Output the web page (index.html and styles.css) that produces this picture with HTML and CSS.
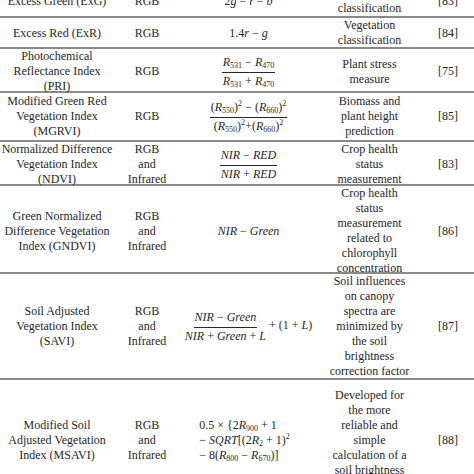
FILE: index.html
```html
<!DOCTYPE html>
<html>
<head>
<meta charset="utf-8">
<link rel="stylesheet" href="styles.css">
</head>
<body>
<div class="table">
  <div class="row r0">
    <div class="cell">Excess Green (ExG)</div>
    <div class="cell">RGB</div>
    <div class="cell"><span class="m">2<i>g</i> − <i>r</i> − <i>b</i></span></div>
    <div class="cell">Vegetation<br>classification</div>
    <div class="cell">[83]</div>
  </div>
  <div class="row r1">
    <div class="cell">Excess Red (ExR)</div>
    <div class="cell">RGB</div>
    <div class="cell"><span class="m">1.4<i>r</i> − <i>g</i></span></div>
    <div class="cell">Vegetation<br>classification</div>
    <div class="cell">[84]</div>
  </div>
  <div class="row r2">
    <div class="cell">Photochemical<br>Reflectance Index<br>(PRI)</div>
    <div class="cell">RGB</div>
    <div class="cell"><span class="m frac"><span class="num"><i>R</i><sub>531</sub> − <i>R</i><sub>470</sub></span><span class="den"><i>R</i><sub>531</sub> + <i>R</i><sub>470</sub></span></span></div>
    <div class="cell">Plant stress<br>measure</div>
    <div class="cell">[75]</div>
  </div>
  <div class="row r3">
    <div class="cell">Modified Green Red<br>Vegetation Index<br>(MGRVI)</div>
    <div class="cell">RGB</div>
    <div class="cell"><span class="m frac"><span class="num">(<i>R</i><sub>550</sub>)<sup>2</sup> − (<i>R</i><sub>660</sub>)<sup>2</sup></span><span class="den">(<i>R</i><sub>550</sub>)<sup>2</sup>+(<i>R</i><sub>660</sub>)<sup>2</sup></span></span></div>
    <div class="cell">Biomass and<br>plant height<br>prediction</div>
    <div class="cell">[85]</div>
  </div>
  <div class="row r4">
    <div class="cell">Normalized Difference<br>Vegetation Index<br>(NDVI)</div>
    <div class="cell">RGB<br>and<br>Infrared</div>
    <div class="cell"><span class="m frac"><span class="num"><i>NIR</i> − <i>RED</i></span><span class="den"><i>NIR</i> + <i>RED</i></span></span></div>
    <div class="cell">Crop health<br>status<br>measurement</div>
    <div class="cell">[83]</div>
  </div>
  <div class="row r5">
    <div class="cell">Green Normalized<br>Difference Vegetation<br>Index (GNDVI)</div>
    <div class="cell">RGB<br>and<br>Infrared</div>
    <div class="cell"><span class="m"><i>NIR</i> − <i>Green</i></span></div>
    <div class="cell">Crop health<br>status<br>measurement<br>related to<br>chlorophyll<br>concentration</div>
    <div class="cell">[86]</div>
  </div>
  <div class="row r6">
    <div class="cell">Soil Adjusted<br>Vegetation Index<br>(SAVI)</div>
    <div class="cell">RGB<br>and<br>Infrared</div>
    <div class="cell"><span class="m"><span class="frac"><span class="num"><i>NIR</i> − <i>Green</i></span><span class="den"><i>NIR</i> + <i>Green</i> + <i>L</i></span></span> + (1 + <i>L</i>)</span></div>
    <div class="cell">Soil influences<br>on canopy<br>spectra are<br>minimized by<br>the soil<br>brightness<br>correction factor</div>
    <div class="cell">[87]</div>
  </div>
  <div class="row r7">
    <div class="cell">Modified Soil<br>Adjusted Vegetation<br>Index (MSAVI)</div>
    <div class="cell">RGB<br>and<br>Infrared</div>
    <div class="cell"><span class="m lines">0.5 × {2<i>R</i><sub>900</sub> + 1<br>− <i>SQRT</i>[(2<i>R</i><sub>2</sub> + 1)<sup>2</sup><br>− 8(<i>R</i><sub>800</sub> − <i>R</i><sub>670</sub>)]</span></div>
    <div class="cell">Developed for<br>the more<br>reliable and<br>simple<br>calculation of a<br>soil brightness<br>correction factor</div>
    <div class="cell">[88]</div>
  </div>
</div>
</body>
</html>
```

FILE: styles.css
```css
html, body {
  margin: 0;
  padding: 0;
  overflow: hidden;
  background: #ffffff;
}
body {
  width: 474px;
  height: 474px;
  font-family: "Liberation Serif", "Times New Roman", serif;
  font-size: 12px;
  line-height: 15px;
  color: #262626;
}
.table {
  margin-top: -14px;
}
.row {
  display: grid;
  grid-template-columns: 114px 66px 137px 105px 52px;
  align-items: center;
  box-sizing: border-box;
  border-bottom: 2px solid #8a8a8a;
}
.r0 { height: 32px; }
.r1 { height: 31px; }
.r2 { height: 44px; }
.r3 { height: 49px; }
.r4 { height: 44px; }
.r5 { height: 88px; }
.r6 { height: 106px; }
.r7 { height: 120px; border-bottom: none; }
.cell {
  text-align: center;
  white-space: nowrap;
}
.m {
  font-size: 12px;
}
.m i {
  font-style: italic;
}
.m sub, .m sup {
  font-size: 8px;
  line-height: 0;
}
.m sub { vertical-align: -2px; }
.m sup { vertical-align: 5px; }
.frac {
  display: inline-flex;
  flex-direction: column;
  align-items: center;
  vertical-align: middle;
}
.num {
  border-bottom: 1px solid #262626;
  padding: 0 1px 2px;
  line-height: 15px;
}
.den {
  padding-top: 1px;
  line-height: 15px;
}
.lines {
  display: inline-block;
  text-align: left;
  margin-left: -8px;
}
```
